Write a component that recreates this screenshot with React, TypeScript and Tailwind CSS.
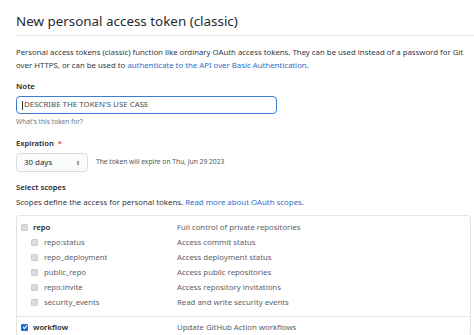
const scopes = [
  { name: "repo", desc: "Full control of private repositories", child: false },
  { name: "repo:status", desc: "Access commit status", child: true },
  { name: "repo_deployment", desc: "Access deployment status", child: true },
  { name: "public_repo", desc: "Access public repositories", child: true },
  { name: "repo:invite", desc: "Access repository invitations", child: true },
  { name: "security_events", desc: "Read and write security events", child: true },
]

function Box({ checked }: { checked?: boolean }) {
  if (checked) {
    return (
      <span className="w-[7px] h-[7px] rounded-[1px] bg-[#1f6fd6] flex items-center justify-center shrink-0">
        <svg viewBox="0 0 8 8" className="w-[6px] h-[6px]">
          <path d="M1.3 4.2 L3.2 6 L6.8 1.8" fill="none" stroke="#fff" strokeWidth="1.4" />
        </svg>
      </span>
    )
  }
  return <span className="w-[7px] h-[7px] rounded-[1px] bg-[#dcdcdc] border border-[#cdcdcd] shrink-0" />
}

export default function App() {
  return (
    <div className="w-[474px] h-[335px] overflow-hidden bg-white text-[#24292f] [font-family:'Noto_Sans',sans-serif] pl-4">

      {/* TITLE */}
      <div className="pt-[12px] pb-[5px] border-b border-[#e8eaed] mr-[-20px]">
        <h1 className="text-[13.4px] leading-[18px] font-normal">New personal access token (classic)</h1>
      </div>

      <p className="mt-[10px] text-[7.8px] leading-[12.5px] text-[#33383e]">
        Personal access tokens (classic) function like ordinary OAuth access tokens. They can be used instead of a password for Git over HTTPS, or can be used to{" "}
        <span className="text-[#2f6fc8]">authenticate to the API over Basic Authentication</span>.
      </p>

      {/* NOTE */}
      <div className="mt-[9px] text-[7.9px] font-semibold leading-[12px]">Note</div>
      <div className="mt-[4px] w-[261px] h-[18px] rounded-[4px] border-[1.5px] border-[#3d7bd6] flex items-center pl-[5px] text-[7.9px] text-[#4a4f55]">
        <span className="w-px h-[9px] bg-[#333] mr-px" />
        DESCRIBE THE TOKEN'S USE CASE
      </div>
      <div className="mt-[3px] text-[6.6px] text-[#6e7781] leading-[10px]">What's this token for?</div>

      {/* EXPIRATION */}
      <div className="mt-[10px] text-[7.6px] font-semibold leading-[12px]">
        Expiration <span className="text-[#d1242f] font-normal ml-[2px]">*</span>
      </div>
      <div className="mt-[4px] flex items-center gap-[8px]">
        <div className="w-[72px] h-[19px] rounded-[4px] border border-[#d8dbdf] bg-[#fafbfc] flex items-center justify-between pl-[7px] pr-[7px] text-[7.9px]">
          <span>30 days</span>
          <svg viewBox="0 0 8 10" className="w-[4px] h-[6px]">
            <path d="M4 0.5 L7 4 L1 4 Z M4 9.5 L7 6 L1 6 Z" fill="#666" />
          </svg>
        </div>
        <span className="text-[6.7px] text-[#4f565d]">The token will expire on Thu, Jun 29 2023</span>
      </div>

      {/* SCOPES */}
      <div className="mt-[9px] text-[7.7px] font-semibold leading-[12px]">Select scopes</div>
      <div className="mt-[3px] text-[7.85px] leading-[12px] text-[#33383e]">
        Scopes define the access for personal tokens. <span className="text-[#2f6fc8]">Read more about OAuth scopes.</span>
      </div>

      <div className="mt-[7px] w-[455px] border border-[#e3e5e8] rounded-[3px]">
        <div className="pt-[4px] pb-[6px]">
          {scopes.map((s) => (
            <div key={s.name} className="flex items-center h-[15px]">
              <div className={`w-[160px] flex items-center ${s.child ? "pl-[14px] gap-[6px]" : "pl-[4px] gap-[5px]"}`}>
                <Box />
                <span className={s.child ? "text-[7.7px] text-[#5b6168]" : "text-[7.7px] font-semibold text-[#24292f]"}>{s.name}</span>
              </div>
              <span className="text-[7.8px] text-[#5b6168]">{s.desc}</span>
            </div>
          ))}
        </div>
        <div className="border-t border-[#e3e5e8] pt-[3px]">
          <div className="flex items-center h-[15px]">
            <div className="w-[160px] flex items-center gap-[5px] pl-[4px]">
              <Box checked />
              <span className="text-[7.7px] font-semibold">workflow</span>
            </div>
            <span className="text-[7.8px] text-[#5b6168]">Update GitHub Action workflows</span>
          </div>
        </div>
      </div>
    </div>
  )
}
